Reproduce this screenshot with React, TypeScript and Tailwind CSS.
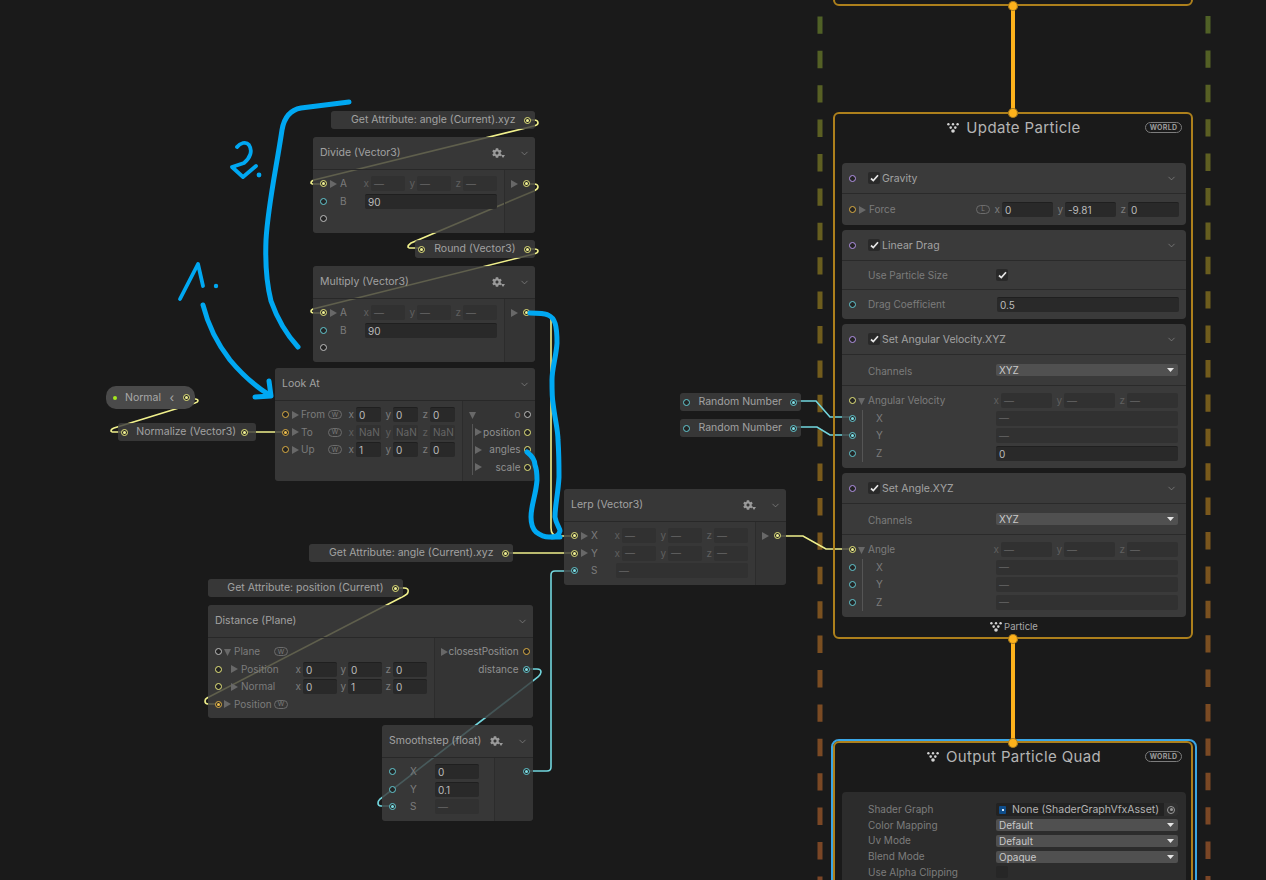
import React from "react";
import { ChevronDown } from "lucide-react";
import { FaCog } from "react-icons/fa";

const portColors = {
  yellow: "border-[#e6e67c]",
  cyan: "border-[#63c9d2]",
  grey: "border-[#bdbdbd]",
  orange: "border-[#dcae45]",
  purple: "border-[#b493e8]",
};
const dotColors = {
  yellow: "bg-[#f2f294]",
  cyan: "bg-[#7fdfe6]",
  grey: "bg-[#bdbdbd]",
  orange: "bg-[#f0c050]",
  purple: "bg-[#b493e8]",
};

type PortColor = keyof typeof portColors;

function Port({ color = "yellow", on = false }: { color?: PortColor; on?: boolean }) {
  return (
    <span className={`w-[7px] h-[7px] shrink-0 rounded-full border-[1.5px] bg-[#242424] flex items-center justify-center ${portColors[color]}`}>
      {on && <span className={`w-[3px] h-[3px] rounded-full ${dotColors[color]}`} />}
    </span>
  );
}

function Tri({ down = false }: { down?: boolean }) {
  return (
    <svg width="7" height="8" viewBox="0 0 7 8" className="shrink-0">
      <polygon points={down ? "0,1 7,1 3.5,8" : "0,0 7,4 0,8"} fill="#686868" />
    </svg>
  );
}

function Field({ w, value, dim = false }: { w: string; value: string; dim?: boolean }) {
  return (
    <span className={`${w} h-[15px] shrink-0 rounded-[2px] pl-[3px] flex items-center text-[10px] leading-none ${dim ? "bg-[#313131] text-[#666666]" : "bg-[#292929] border-t border-[#1f1f1f] text-[#bcbcbc]"}`}>
      {value}
    </span>
  );
}

// the three x y z boxes that recur in every node, aligned to the right of their row
function Vec({ w, label, values, dim = false }: { w: string; label: string; values: string[]; dim?: boolean }) {
  return (
    <div className="ml-auto flex items-center">
      {["x", "y", "z"].map((axis, i) => (
        <React.Fragment key={axis}>
          <span className={`${label} text-right pr-[2px] text-[10px] ${dim ? "text-[#5f5f5f]" : "text-[#7c7c7c]"}`}>{axis}</span>
          <Field w={w} value={values[i]} dim={dim} />
        </React.Fragment>
      ))}
    </div>
  );
}

function Space({ letter = "W" }: { letter?: string }) {
  return (
    <span className="w-[14px] h-[9px] shrink-0 rounded-full border border-[#6c6c6c] flex items-center justify-center text-[6.5px] leading-none text-[#7c7c7c]">
      {letter}
    </span>
  );
}

function Row({ children, className = "" }: { children?: React.ReactNode; className?: string }) {
  return <div className={`h-[17.5px] flex items-center ${className}`}>{children}</div>;
}

function Label({ children, className = "" }: { children: React.ReactNode; className?: string }) {
  return <span className={`text-[10px] whitespace-nowrap text-[#7c7c7c] ${className}`}>{children}</span>;
}

function Chevron() {
  return <ChevronDown className="w-[11px] h-[11px] text-[#8a8a8a]" strokeWidth={1.5} />;
}

function Gear() {
  return (
    <span className="flex items-end mr-[14px] text-[#9a9a9a]">
      <FaCog className="w-[10px] h-[10px]" />
      <svg width="4" height="3" viewBox="0 0 4 3" className="-ml-[1px]">
        <polygon points="0,0 4,0 2,3" fill="#9a9a9a" />
      </svg>
    </span>
  );
}

function Node({ className, title, gear = false, left, right, rightClass }: { className: string; title: string; gear?: boolean; left: React.ReactNode; right: React.ReactNode; rightClass: string }) {
  return (
    <div className={`absolute rounded-[3px] bg-[#3e3e3e]/[0.82] ${className}`}>
      <div className="h-[33px] pl-[7px] pr-[5px] flex items-center border-b border-[#282828]">
        <span className="text-[10.5px] text-[#a2a2a2]">{title}</span>
        <span className="ml-auto flex items-center">
          {gear && <Gear />}
          <Chevron />
        </span>
      </div>
      <div className="flex">
        <div className="flex-1 min-w-0 pl-[7px] pr-[7px] pt-[5px] pb-[5px]">{left}</div>
        <div className={`border-l border-[#2c2c2c] bg-black/5 pt-[5px] pb-[5px] ${rightClass}`}>{right}</div>
      </div>
    </div>
  );
}

function Chip({ className, children }: { className: string; children: React.ReactNode }) {
  return <div className={`absolute h-[18px] rounded-[3px] bg-[#3e3e3e]/[0.82] flex items-center text-[10.5px] text-[#a2a2a2] ${className}`}>{children}</div>;
}

function Check() {
  return (
    <span className="w-[12px] h-[12px] shrink-0 rounded-[2px] bg-[#292929] flex items-center justify-center">
      <svg width="9" height="8" viewBox="0 0 9 8">
        <path d="M1 4.5 L3.3 6.6 L8 1.2" fill="none" stroke="#e6e6e6" strokeWidth="1.7" />
      </svg>
    </span>
  );
}

function BlockHead({ title }: { title: string }) {
  return (
    <div className="h-[31px] pl-[7px] pr-[9px] flex items-center border-b border-[#2a2a2a]">
      <Port color="purple" />
      <span className="ml-[12px] mr-[2px]"><Check /></span>
      <span className="mt-[2px] text-[10.5px] text-[#a2a2a2]">{title}</span>
      <span className="ml-auto"><Chevron /></span>
    </div>
  );
}

function Dropdown({ value, className = "" }: { value: string; className?: string }) {
  return (
    <div className={`ml-auto w-[182px] h-[12px] rounded-[2px] bg-[#505050] pl-[3px] pr-[3px] flex items-center text-[10px] leading-none text-[#c8c8c8] ${className}`}>
      {value}
      <svg width="7" height="4" viewBox="0 0 7 4" className="ml-auto mr-[1px]">
        <polygon points="0,0 7,0 3.5,4" fill="#e4e4e4" />
      </svg>
    </div>
  );
}

function Channels() {
  return (
    <div className="h-[31px] pl-[26px] pr-[8px] flex items-center border-b border-[#2a2a2a]">
      <Label className="mt-[2px]">Channels</Label>
      <Dropdown value="XYZ" />
    </div>
  );
}

// expanded vector slot of the Set blocks: the vector row plus one row per component
function VectorSlot({ title, linked, values }: { title: string; linked: boolean; values: { name: string; on: boolean; value: string }[] }) {
  return (
    <div className="relative pl-[7px] pr-[8px] pt-[6px] pb-[6px]">
      <div className="absolute left-[20px] top-[24px] bottom-[6px] border-l border-[#555555]" />
      <Row>
        <Port color="yellow" on={linked} />
        <span className="ml-[2px] mr-[3px]"><Tri down /></span>
        <Label>{title}</Label>
        <Vec w="w-[51px]" label="w-[12px]" values={["—", "—", "—"]} dim />
      </Row>
      {values.map((v) => (
        <Row key={v.name}>
          <Port color="cyan" on={v.on} />
          <Label className="ml-[20px]">{v.name}</Label>
          <span className="ml-auto">
            <Field w="w-[182px]" value={v.value} dim={v.value === "—"} />
          </span>
        </Row>
      ))}
    </div>
  );
}

function Vfx({ className = "" }: { className?: string }) {
  return (
    <svg width="12" height="10" viewBox="0 0 12 10" className={className}>
      <g fill="#d4d4d4">
        <circle cx="1.4" cy="1.2" r="1.2" />
        <circle cx="6" cy="1.2" r="1.2" />
        <circle cx="10.6" cy="1.2" r="1.2" />
        <circle cx="3.7" cy="4.6" r="1.3" />
        <circle cx="8.3" cy="4.6" r="1.3" />
        <circle cx="6" cy="8" r="1.8" />
      </g>
    </svg>
  );
}

function World() {
  return (
    <span className="absolute right-[4px] top-[8px] w-[37px] h-[11px] rounded-full border-[1.5px] border-[#7c7c7c] flex items-center justify-center text-[7px] font-bold leading-none tracking-[0.3px] text-[#9a9a9a]">
      WORLD
    </span>
  );
}

function ContextTitle({ title }: { title: string }) {
  return (
    <div className="relative h-[49px] pt-[1px]">
      <div className="h-[26px] flex items-center justify-center gap-[7px]">
        <Vfx />
        <span className="text-[15px] text-[#b4b4b4] tracking-[0.35px]">{title}</span>
      </div>
      <World />
    </div>
  );
}

const yellowWires = [
  "M527 120 H534 Q538 120 538 123 Q538 125 534 126 L314 180 Q311 181 311 183 Q311 184 314 184 H323",
  "M527 184 H534 Q538 184 538 187 Q538 189 534 191 L411 243 Q408 245 408 247 Q408 248 411 248 H421",
  "M527 249 H534 Q538 249 538 251 Q538 253 534 254 L313 309 Q311 310 311 311 Q311 313 314 313 H323",
  "M195 399 Q198 399 198 401 Q198 402 195 403 L114 428 Q111 429 111 431 Q111 432 114 432 H125",
  "M245 432 H285",
  "M527 313 H545 Q551 313 551 320 V528 Q551 536 558 536 H574",
  "M505 553 H574",
  "M395 588 H404 Q409 588 408 592 Q408 594 404 596 L207 698 Q205 699 205 701 Q205 704 208 704 H218",
  "M779 536 H803 L826 549 H852",
];

const cyanWires = [
  "M794 401 H816 L830 417 H852",
  "M794 427 H817 L830 435 H852",
  "M526 669 H537 Q541 669 541 672 Q541 674 538 677 L380 799 Q378 801 378 803 Q378 806 381 806 H393",
  "M526 771 H547 Q551 771 551 767 V575 Q551 571 555 571 H574",
];

export default function App() {
  return (
    <div className="relative w-[1266px] h-[880px] overflow-hidden bg-[#1a1a1a] [font-family:Inter,sans-serif]">
      {/* Wires sit below the translucent nodes, that is what dims them over a node */}
      <svg width="1266" height="880" className="absolute left-0 top-0">
        <defs>
          <linearGradient id="dash" gradientUnits="userSpaceOnUse" x1="0" y1="0" x2="0" y2="880">
            <stop offset="0" stopColor="#4d6127" />
            <stop offset="0.35" stopColor="#6e5d1d" />
            <stop offset="0.55" stopColor="#7a5a1b" />
            <stop offset="0.8" stopColor="#7b4b23" />
            <stop offset="1" stopColor="#7a4526" />
          </linearGradient>
        </defs>
        <path d="M820 -18 V880" stroke="url(#dash)" strokeWidth="5" strokeDasharray="17.4 17" />
        <path d="M1208 16 V880" stroke="url(#dash)" strokeWidth="5" strokeDasharray="17.4 17" />
        {yellowWires.map((d) => (
          <path key={d} d={d} fill="none" stroke="#f0f08c" strokeWidth="1.6" />
        ))}
        {cyanWires.map((d) => (
          <path key={d} d={d} fill="none" stroke="#72d6de" strokeWidth="1.6" />
        ))}
        <path d="M1013 6 V112 M1013 639 V742" stroke="#fdb21c" strokeWidth="4" />
      </svg>

      <Chip className="left-[331px] top-[111px] w-[204px] justify-end pr-[4.5px]">
        Get Attribute: angle (Current).xyz
        <span className="ml-[8px]"><Port on /></span>
      </Chip>

      <Node
        className="left-[313px] top-[137px] w-[222px]"
        title="Divide (Vector3)"
        gear
        rightClass="w-[31px]"
        left={
          <>
            <Row>
              <Port on />
              <span className="ml-[3px] mr-[3px]"><Tri /></span>
              <Label>A</Label>
              <Vec w="w-[34px]" label="w-[12px]" values={["—", "—", "—"]} dim />
            </Row>
            <Row>
              <Port color="cyan" />
              <Label className="ml-[13px]">B</Label>
              <span className="ml-auto"><Field w="w-[132px]" value="90" /></span>
            </Row>
            <Row>
              <Port color="grey" />
            </Row>
          </>
        }
        right={
          <Row className="pl-[6px] gap-[5px]">
            <Tri />
            <Port on />
          </Row>
        }
      />

      <Chip className="left-[415px] top-[240px] w-[120px] pl-[3px] pr-[4.5px] justify-between">
        <Port on />
        <span className="ml-auto mr-[8px]">Round (Vector3)</span>
        <Port on />
      </Chip>

      <Node
        className="left-[313px] top-[266px] w-[222px]"
        title="Multiply (Vector3)"
        gear
        rightClass="w-[31px]"
        left={
          <>
            <Row>
              <Port on />
              <span className="ml-[3px] mr-[3px]"><Tri /></span>
              <Label>A</Label>
              <Vec w="w-[34px]" label="w-[12px]" values={["—", "—", "—"]} dim />
            </Row>
            <Row>
              <Port color="cyan" />
              <Label className="ml-[13px]">B</Label>
              <span className="ml-auto"><Field w="w-[132px]" value="90" /></span>
            </Row>
            <Row>
              <Port color="grey" />
            </Row>
          </>
        }
        right={
          <Row className="pl-[6px] gap-[5px]">
            <Tri />
            <Port on />
          </Row>
        }
      />

      <Node
        className="left-[275px] top-[368px] w-[260px]"
        title="Look At"
        rightClass="w-[73px] relative"
        left={
          <>
            {[
              { name: "From", on: false, values: ["0", "0", "0"], dim: false },
              { name: "To", on: true, values: ["NaN", "NaN", "NaN"], dim: true },
              { name: "Up", on: false, values: ["1", "0", "0"], dim: false },
            ].map((r) => (
              <Row key={r.name}>
                <Port color="orange" on={r.on} />
                <span className="ml-[3px] mr-[2px]"><Tri /></span>
                <Label className="w-[27px]">{r.name}</Label>
                <Space />
                <Vec w="w-[25px]" label="w-[12px]" values={r.values} dim={r.dim} />
              </Row>
            ))}
          </>
        }
        right={
          <>
            <div className="absolute left-[9px] top-[23px] bottom-[6px] border-l border-[#555555]" />
            <Row className="pl-[6px] pr-[4.5px]">
              <Tri down />
              <Label className="ml-auto mr-[3px]">o</Label>
              <Port color="grey" />
            </Row>
            {["position", "angles", "scale"].map((name) => (
              <Row key={name} className="pl-[12px] pr-[4.5px]">
                <Tri />
                <Label className="ml-auto mr-[3px] text-[#909090]">{name}</Label>
                <Port />
              </Row>
            ))}
          </>
        }
      />

      {/* Property pill */}
      <div className="absolute left-[106px] top-[386px] w-[89px] h-[23px] rounded-[10px] bg-[#4a4a4a] flex items-center pl-[7px] pr-[5px] text-[10.5px] text-[#a8a8a8]">
        <span className="w-[4px] h-[4px] rounded-full bg-[#a6e81e]" />
        <span className="ml-[8px]">Normal</span>
        <span className="ml-auto mr-[9px] text-[12px] leading-none">‹</span>
        <Port on />
      </div>

      <Chip className="left-[118px] top-[423px] w-[138px] pl-[3px] pr-[8px]">
        <Port on />
        <span className="ml-auto mr-[5px]">Normalize (Vector3)</span>
        <Port on />
      </Chip>

      <Chip className="left-[309px] top-[544px] w-[204px] justify-end pr-[4.5px]">
        Get Attribute: angle (Current).xyz
        <span className="ml-[8px]"><Port on /></span>
      </Chip>

      <Chip className="left-[208px] top-[579px] w-[195px] justify-end pr-[4.5px]">
        Get Attribute: position (Current)
        <span className="ml-[8px]"><Port on /></span>
      </Chip>

      <Node
        className="left-[208px] top-[605px] w-[325px]"
        title="Distance (Plane)"
        rightClass="w-[99px]"
        left={
          <>
            <Row>
              <Port color="grey" />
              <span className="ml-[2px] mr-[3px]"><Tri down /></span>
              <Label className="w-[40px]">Plane</Label>
              <Space />
            </Row>
            <Row>
              <Port />
              <span className="ml-[9px] mr-[3px]"><Tri /></span>
              <Label>Position</Label>
              <Vec w="w-[34px]" label="w-[11px]" values={["0", "0", "0"]} />
            </Row>
            <Row>
              <Port />
              <span className="ml-[9px] mr-[3px]"><Tri /></span>
              <Label>Normal</Label>
              <Vec w="w-[34px]" label="w-[11px]" values={["0", "1", "0"]} />
            </Row>
            <Row>
              <Port color="orange" on />
              <span className="ml-[2px] mr-[3px]"><Tri /></span>
              <Label className="w-[40px]">Position</Label>
              <Space />
            </Row>
          </>
        }
        right={
          <>
            <Row className="pl-[6px] pr-[3.5px]">
              <Tri />
              <Label className="ml-auto mr-[4px] text-[#909090] tracking-[-0.1px]">closestPosition</Label>
              <Port color="orange" />
            </Row>
            <Row className="pr-[3.5px] justify-end">
              <Label className="mr-[4px] text-[#909090]">distance</Label>
              <Port color="cyan" on />
            </Row>
          </>
        }
      />

      <Node
        className="left-[382px] top-[725px] w-[151px]"
        title="Smoothstep (float)"
        gear
        rightClass="w-[39px] flex flex-col items-end pr-[3.5px]"
        left={
          <>
            {[
              { name: "X", value: "0", on: false },
              { name: "Y", value: "0.1", on: false },
              { name: "S", value: "—", on: true },
            ].map((r) => (
              <Row key={r.name}>
                <Port color="cyan" on={r.on} />
                <Label className="ml-[14px]">{r.name}</Label>
                <span className="ml-auto mr-[8px]"><Field w="w-[44px]" value={r.value} dim={r.value === "—"} /></span>
              </Row>
            ))}
          </>
        }
        right={
          <Row>
            <Port color="cyan" on />
          </Row>
        }
      />

      <Node
        className="left-[564px] top-[489px] w-[222px]"
        title="Lerp (Vector3)"
        gear
        rightClass="w-[31px]"
        left={
          <>
            <Row>
              <Port on />
              <span className="ml-[3px] mr-[3px]"><Tri /></span>
              <Label>X</Label>
              <Vec w="w-[34px]" label="w-[12px]" values={["—", "—", "—"]} dim />
            </Row>
            <Row>
              <Port on />
              <span className="ml-[3px] mr-[3px]"><Tri /></span>
              <Label>Y</Label>
              <Vec w="w-[34px]" label="w-[12px]" values={["—", "—", "—"]} dim />
            </Row>
            <Row>
              <Port color="cyan" on />
              <Label className="ml-[13px]">S</Label>
              <span className="ml-auto"><Field w="w-[132px]" value="—" dim /></span>
            </Row>
          </>
        }
        right={
          <Row className="pl-[6px] gap-[5px]">
            <Tri />
            <Port on />
          </Row>
        }
      />

      <Chip className="left-[680px] top-[393px] w-[121px] pl-[3px] pr-[4px]">
        <Port color="cyan" />
        <span className="ml-auto mr-[8px]">Random Number</span>
        <Port color="cyan" on />
      </Chip>
      <Chip className="left-[680px] top-[419px] w-[121px] pl-[3px] pr-[4px]">
        <Port color="cyan" />
        <span className="ml-auto mr-[8px]">Random Number</span>
        <Port color="cyan" on />
      </Chip>

      {/* Contexts */}
      <div className="absolute left-[833px] top-[-60px] w-[360px] h-[66px] rounded-md border-2 border-[#ad801c]" />

      <div className="absolute left-[833px] top-[112px] w-[360px] h-[527px] rounded-md border-2 border-[#ad801c] pl-[7px] pr-[5px]">
        <ContextTitle title="Update Particle" />
        <div className="flex flex-col gap-[5px]">
          <div className="rounded-[4px] bg-[#424242]/[0.82]">
            <BlockHead title="Gravity" />
            <div className="h-[31px] pl-[7px] pr-[7px] flex items-center">
              <Port color="orange" />
              <span className="ml-[3px] mr-[3px]"><Tri /></span>
              <Label>Force</Label>
              <div className="ml-auto flex items-center">
                <Space letter="L" />
                <Vec w="w-[51px]" label="w-[12px]" values={["0", "-9.81", "0"]} />
              </div>
            </div>
          </div>

          <div className="rounded-[4px] bg-[#424242]/[0.82]">
            <BlockHead title="Linear Drag" />
            <div className="h-[29px] pl-[26px] flex items-center border-b border-[#2a2a2a]">
              <Label className="w-[128px]">Use Particle Size</Label>
              <Check />
            </div>
            <div className="h-[29px] pl-[7px] pr-[7px] flex items-center">
              <Port color="cyan" />
              <Label className="ml-[12px]">Drag Coefficient</Label>
              <span className="ml-auto"><Field w="w-[182px]" value="0.5" /></span>
            </div>
          </div>

          <div className="rounded-[4px] bg-[#424242]/[0.82]">
            <BlockHead title="Set Angular Velocity.XYZ" />
            <Channels />
            <VectorSlot
              title="Angular Velocity"
              linked={false}
              values={[
                { name: "X", on: true, value: "—" },
                { name: "Y", on: true, value: "—" },
                { name: "Z", on: false, value: "0" },
              ]}
            />
          </div>

          <div className="rounded-[4px] bg-[#424242]/[0.82]">
            <BlockHead title="Set Angle.XYZ" />
            <Channels />
            <VectorSlot
              title="Angle"
              linked
              values={[
                { name: "X", on: false, value: "—" },
                { name: "Y", on: false, value: "—" },
                { name: "Z", on: false, value: "—" },
              ]}
            />
          </div>
        </div>
        <div className="h-[20px] flex items-center justify-center gap-[2px]">
          <Vfx />
          <span className="text-[9.5px] text-[#a8a8a8]">Particle</span>
        </div>
      </div>

      <div className="absolute left-[831px] top-[739px] w-[366px] h-[200px] rounded-lg border-2 border-[#3aa6e6]" />
      <div className="absolute left-[833px] top-[741px] w-[360px] h-[200px] rounded-md border-2 border-[#ad801c] pl-[7px] pr-[5px]">
        <ContextTitle title="Output Particle Quad" />
        <div className="rounded-[4px] bg-[#2c2c2c] pt-[10px] pl-[26px] pr-[8px] h-[120px]">
          {[
            { name: "Shader Graph", value: "" },
            { name: "Color Mapping", value: "Default" },
            { name: "Uv Mode", value: "Default" },
            { name: "Blend Mode", value: "Opaque" },
          ].map((r) => (
            <div key={r.name} className="h-[15.6px] flex items-center">
              <Label>{r.name}</Label>
              {r.value ? (
                <Dropdown value={r.value} />
              ) : (
                <div className="ml-auto w-[182px] h-[13px] rounded-[2px] bg-[#222222] flex items-center pl-[3px] text-[10.5px] text-[#b4b4b4]">
                  <span className="w-[7px] h-[8px] rounded-[1px] bg-[#0f4d8a] mr-[6px] flex items-center justify-center">
                    <span className="w-[2px] h-[2px] bg-[#d8e8f8]" />
                  </span>
                  None (ShaderGraphVfxAsset)
                  <span className="ml-auto h-full w-[14px] bg-[#303030] rounded-r-[2px] flex items-center justify-center">
                    <span className="w-[8px] h-[8px] rounded-full border border-[#9a9a9a] flex items-center justify-center">
                      <span className="w-[3px] h-[3px] rounded-full bg-[#9a9a9a]" />
                    </span>
                  </span>
                </div>
              )}
            </div>
          ))}
          <div className="h-[15.6px] flex items-center">
            <Label>Use Alpha Clipping</Label>
            <span className="ml-auto mr-[170px] w-[12px] h-[12px] rounded-[2px] bg-[#262626]" />
          </div>
        </div>
      </div>

      {/* Flow anchors and the hand-drawn annotations go over everything */}
      <svg width="1266" height="880" className="absolute left-0 top-0 pointer-events-none">
        {[6, 113, 639, 743].map((y) => (
          <circle key={y} cx="1013" cy={y} r="4.5" fill="#fdb21c" stroke="#a87a1c" strokeWidth="1.2" />
        ))}
        <g fill="none" stroke="#00a8f2" strokeWidth="5" strokeLinecap="round" strokeLinejoin="round">
          <path d="M349 102 L301 108 C290 110 284 118 282 130 C276 170 268 205 266 240 C265 265 267 285 271 301 C277 318 287 335 298 347" />
          <path d="M237 147 C240 143 246 141 249 145 C253 151 250 158 244 163 L232 167 L243 177 L256 166" strokeWidth="3.8" />
          <path d="M180 299 L198 264 L203 286" strokeWidth="3.8" />
          <path d="M203 305 C208 325 216 342 230 360 C240 372 252 384 268 394" />
          <path d="M269 381 L271 396 L255 397" />
          <path d="M530 313 C538 313 544 313 548 315 C555 318 557 325 557 343 C556 358 552 368 552 380 C552 392 552 398 553 403 C555 420 558 430 558 440 C559 455 559 465 559 477 C558 495 555 505 555 517 C556 524 560 528 560 531 C559 535 556 537 552 537" />
          <path d="M527 452 C532 456 535 460 535 465 C537 470 537 475 537 480 C536 495 531 505 531 517 C531 525 533 529 536 532 C540 535 544 537 549 537 L560 537" />
        </g>
        <circle cx="259" cy="175" r="2.4" fill="#00a8f2" />
        <circle cx="216" cy="286" r="2.2" fill="#00a8f2" />
      </svg>
    </div>
  );
}
